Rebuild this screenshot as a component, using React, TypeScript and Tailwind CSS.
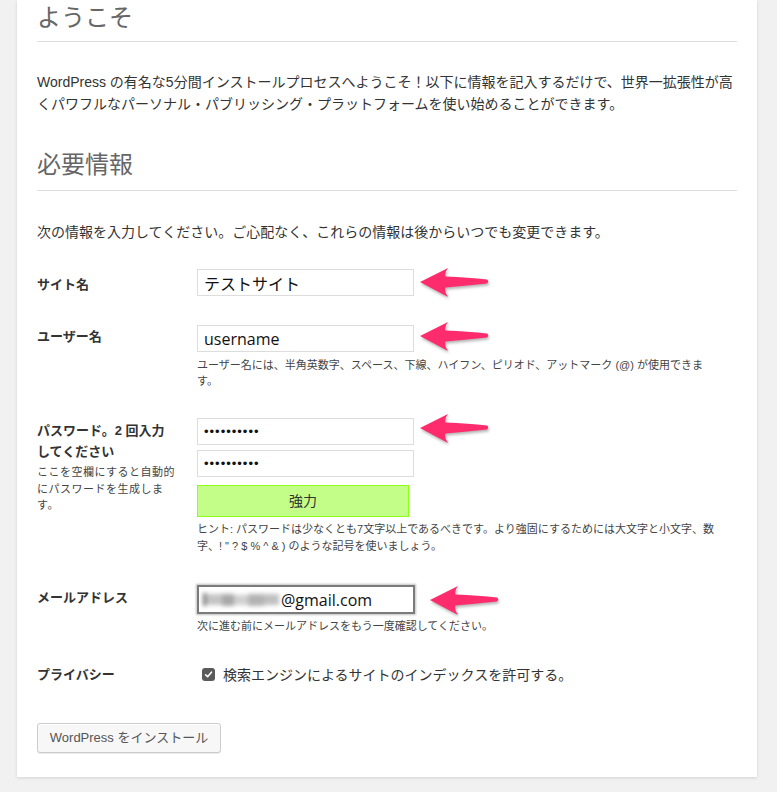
import React from 'react';

const jp = { fontFamily: '"Liberation Sans", "Noto Sans CJK JP", sans-serif' };
const field = { fontFamily: '"Open Sans", "Noto Sans CJK JP", sans-serif' };

const Arrow: React.FC<{ className: string }> = ({ className }) => (
  <svg
    className={`absolute pointer-events-none ${className}`}
    width="76"
    height="36"
    viewBox="0 0 76 36"
    style={{ filter: 'drop-shadow(1px 2px 1.5px rgba(0,0,0,0.3))' }}
  >
    <path
      d="M2 17 L30 3 Q26 8 27.5 11.5 Q50 12.5 69 14.5 Q71.5 16.5 69 18.5 Q50 20.5 27.5 22.5 Q26 27 30 32 Z"
      fill="#ff2c6d"
    />
  </svg>
);

const Label: React.FC<{ children: React.ReactNode }> = ({ children }) => (
  <div className="w-[160px] shrink-0 text-[13px] font-bold leading-[21px] text-[#333]">{children}</div>
);

const TextInput: React.FC<{ value: string; type?: string }> = ({ value, type = 'text' }) => (
  <input
    readOnly
    type={type}
    value={value}
    className="block w-[217px] h-[27px] border border-[#dddddd] bg-white px-[6px] text-[16px] text-[#111] outline-none"
    style={field}
  />
);

export default function App() {
  return (
    <div className="min-h-[792px] bg-[#f1f1f1] pb-[16px]" style={jp}>
      <div className="ml-[17px] w-[740px] bg-white px-[20px] pt-[2px] pb-[24px] text-[#444] shadow-[0_1px_3px_rgba(0,0,0,0.13)]">
        <h1 className="border-b border-[#dddddd] pb-[8px] text-[24px] leading-[31px] text-[#666]">ようこそ</h1>
        <p className="mt-[29px] whitespace-nowrap text-[14px] leading-[22px] text-[#333]">
          WordPress の有名な5分間インストールプロセスへようこそ！以下に情報を記入するだけで、世界一拡張性が高
          <br />
          くパワフルなパーソナル・パブリッシング・プラットフォームを使い始めることができます。
        </p>

        <h2 className="mt-[34px] border-b border-[#dddddd] pb-[10px] text-[24px] leading-[31px] text-[#666]">必要情報</h2>
        <p className="mt-[30px] text-[14px] leading-[22px] text-[#333]">
          次の情報を入力してください。ご心配なく、これらの情報は後からいつでも変更できます。
        </p>

        <div className="mt-[26px] flex">
          <div className="pt-[5px]">
            <Label>サイト名</Label>
          </div>
          <div className="relative">
            <TextInput value="テストサイト" />
            <Arrow className="left-[221px] top-[-4px]" />
          </div>
        </div>

        <div className="mt-[29px] flex">
          <div className="pt-[1px]">
            <Label>ユーザー名</Label>
          </div>
          <div className="relative">
            <TextInput value="username" />
            <Arrow className="left-[221px] top-[-6px]" />
            <p className="mt-[5px] whitespace-nowrap text-[11px] leading-[16px] text-[#444]">
              ユーザー名には、半角英数字、スペース、下線、ハイフン、ピリオド、アットマーク (@) が使用できま
              <br />
              す。
            </p>
          </div>
        </div>

        <div className="mt-[29px] flex">
          <div className="w-[160px] shrink-0 pt-[2px]">
            <Label>
              パスワード。2 回入力
              <br />
              してください
            </Label>
            <p className="mt-[2px] text-[11px] leading-[16.5px] tracking-[0.5px] text-[#444]">
              ここを空欄にすると自動的
              <br />
              にパスワードを生成しま
              <br />
              す。
            </p>
          </div>
          <div className="relative">
            <input
              readOnly
              type="password"
              value="wordpress1"
              className="block w-[217px] h-[27px] border border-[#dddddd] bg-white px-[6px] text-[13px] tracking-[1px] text-[#111] outline-none"
            />
            <Arrow className="left-[221px] top-[-7px]" />
            <input
              readOnly
              type="password"
              value="wordpress1"
              className="mt-[5px] block w-[217px] h-[27px] border border-[#dddddd] bg-white px-[6px] text-[13px] tracking-[1px] text-[#111] outline-none"
            />
            <div className="mt-[8px] flex h-[32px] w-[212px] items-center justify-center border border-[#8dff1c] bg-[#c3ff88] text-[14px] text-[#333]">
              強力
            </div>
            <p className="mt-[4px] whitespace-nowrap text-[11px] leading-[17px] text-[#444]">
              ヒント: パスワードは少なくとも7文字以上であるべきです。より強固にするためには大文字と小文字、数
              <br />
              字、! " ? $ % ^ &amp; ) のような記号を使いましょう。
            </p>
          </div>
        </div>

        <div className="mt-[30px] flex">
          <div className="pt-[2px]">
            <Label>メールアドレス</Label>
          </div>
          <div className="relative">
            <div
              className="flex h-[29px] w-[218px] items-center border-2 border-[#7b7b7b] bg-white pl-[4px] text-[16px] text-[#111] shadow-[0_0_2px_1px_rgba(0,0,0,0.25)]"
              style={field}
            >
              <span className="mr-[2px] flex h-[14px] w-[76px] items-center blur-[2px]">
                <span className="h-[13px] w-[3px] bg-[#777]" />
                <span className="h-[11px] w-[16px] bg-[#c4c4c4]" />
                <span className="h-[12px] w-[12px] bg-[#a9a9a9]" />
                <span className="h-[10px] w-[14px] bg-[#d0d0d0]" />
                <span className="h-[12px] w-[16px] bg-[#b3b3b3]" />
                <span className="h-[11px] w-[15px] bg-[#c0c0c0]" />
              </span>
              @gmail.com
            </div>
            <Arrow className="left-[231px] top-[-2px]" />
            <p className="mt-[4px] text-[11px] leading-[16px] text-[#444]">次に進む前にメールアドレスをもう一度確認してください。</p>
          </div>
        </div>

        <div className="mt-[30px] flex items-center">
          <div className="w-[165px] shrink-0">
            <Label>プライバシー</Label>
          </div>
          <div className="flex items-center">
            <span className="flex h-[13px] w-[13px] items-center justify-center rounded-[3px] bg-[#5a5a5a]">
              <svg width="9" height="9" viewBox="0 0 10 10">
                <path d="M1.8 5.3 L4 7.5 L8.3 2.4" fill="none" stroke="#fff" strokeWidth="1.8" strokeLinecap="round" strokeLinejoin="round" />
              </svg>
            </span>
            <span className="ml-[8px] text-[14px] leading-[20px] text-[#333]">検索エンジンによるサイトのインデックスを許可する。</span>
          </div>
        </div>

        <button className="mt-[38px] flex h-[30px] w-[184px] items-center justify-center rounded-[3px] border border-[#cccccc] bg-[#f7f7f7] text-[13px] text-[#555] shadow-[inset_0_1px_0_#fff,0_1px_0_rgba(0,0,0,0.08)]">
          WordPress をインストール
        </button>
      </div>
    </div>
  );
}
